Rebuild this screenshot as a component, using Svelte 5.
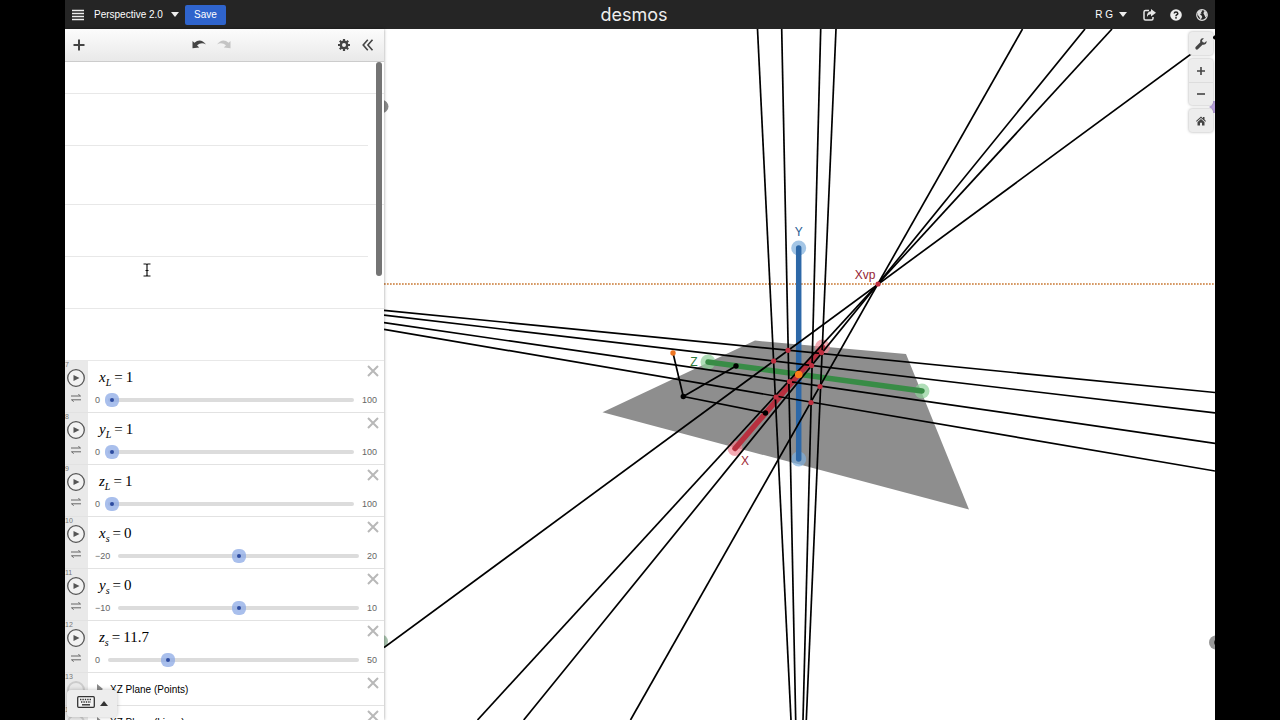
<script>
    let blankRows = [
        { height: 32, short: false },
        { height: 52, short: true },
        { height: 59, short: false },
        { height: 52, short: true },
        { height: 52, short: false },
        { height: 52, short: false }
    ];

    let sliders = [
        { id: 7, name: 'x', sub: 'L', value: 1, min: 0, max: 100 },
        { id: 8, name: 'y', sub: 'L', value: 1, min: 0, max: 100 },
        { id: 9, name: 'z', sub: 'L', value: 1, min: 0, max: 100 },
        { id: 10, name: 'x', sub: 's', value: 0, min: -20, max: 20 },
        { id: 11, name: 'y', sub: 's', value: 0, min: -10, max: 10 },
        { id: 12, name: 'z', sub: 's', value: 11.7, min: 0, max: 50 }
    ];

    let folders = [
        { id: 13, title: 'XZ Plane (Points)' },
        { id: 14, title: 'XZ Plane (Lines)' }
    ];

    // x1, y1, x2, y2
    const lines = [
        [757.5, 29, 791, 720],
        [781.7, 29, 795.7, 720],
        [820.7, 29, 803, 720],
        [836, 29, 806.3, 720],
        [1022.5, 29, 630.5, 720],
        [1085, 29, 523.7, 720],
        [1112, 29, 477.5, 720],
        [1215, 36.5, 384, 647.5],
        [384, 310.3, 1215, 392.5],
        [384, 315.2, 1215, 412.9],
        [384, 322.7, 1215, 443.3],
        [384, 329.3, 1215, 471],
        [673, 353, 683.3, 396.5],
        [683.3, 396.5, 736, 366],
        [683.3, 396.5, 765.5, 413]
    ];

    const redPoints = [
        [788, 350.3], [773.6, 361], [811.6, 365.5], [821.5, 352.6],
        [789.5, 381.5], [776, 397], [820, 386.5], [811, 402.5], [878, 284]
    ];
    const blackPoints = [[683.3, 396.5], [736, 366], [765.5, 413]];

    const axes = [
        { color: '#388c46', halo: '#8ed09a', from: [708, 362], to: [922, 391] },
        { color: '#2d68a8', halo: '#7eaedb', from: [798.7, 248], to: [798.7, 459] },
        { color: '#b8303f', halo: '#ee8794', from: [735, 448.5], to: [822.5, 347] }
    ];

    function format(n) {
        return n < 0 ? '−' + Math.abs(n) : '' + n;
    }

    function removeSlider(id) {
        sliders = sliders.filter((s) => s.id !== id);
    }

    function removeFolder(id) {
        folders = folders.filter((f) => f.id !== id);
    }
</script>

<div class="calculator">
    <header>
        <div class="left">
            <button class="icon" aria-label="Menu">
                <svg width="12" height="12" viewBox="0 0 12 12"><path d="M0 1.500h12M0 4.500h12M0 7.500h12M0 10.500h12" stroke="#eee" stroke-width="1.500" /></svg>
            </button>
            <button class="title">Perspective 2.0 <span class="caret"></span></button>
            <button class="save">Save</button>
        </div>
        <div class="logo">desmos</div>
        <div class="right">
            <button class="title">R G <span class="caret"></span></button>
            <button class="icon" aria-label="Share">
                <svg width="13" height="12" viewBox="0 0 13 12">
                    <path d="M6 1.500H2.500Q1 1.500 1 3v6.500Q1 11 2.500 11h6Q10 11 10 9.500V8" fill="none" stroke="#e6e6e6" stroke-width="1.500" />
                    <path d="M8 0l5 3.700L8 7.400V5.200Q5 5 4 8Q3.500 2.800 8 2.300z" fill="#e6e6e6" />
                </svg>
            </button>
            <button class="icon" aria-label="Help">
                <svg width="12" height="12" viewBox="0 0 12 12">
                    <circle cx="6" cy="6" r="5.800" fill="#eee" />
                    <path d="M4.200 4.500Q4.300 2.900 6 2.900T7.800 4.500Q7.800 5.300 6.700 5.900Q6 6.300 6 7.200" fill="none" stroke="#222" stroke-width="1.500" />
                    <rect x="5.200" y="8.100" width="1.600" height="1.500" fill="#222" />
                </svg>
            </button>
            <button class="icon" aria-label="Language">
                <svg width="12" height="12" viewBox="0 0 12 12">
                    <circle cx="6" cy="6" r="5.300" fill="none" stroke="#ddd" stroke-width="1.200" />
                    <path d="M2 2.300L5.500 1L6.300 2L5 3.200L5.600 4.500L3.800 5L5.500 6.500L6.300 8L4.600 10.800L3.500 8.300L1.500 5.500zM8 2l2.400 1.200L11 6.500L9.500 8.500L8.500 6.200L7.500 4.500z" fill="#ddd" />
                </svg>
            </button>
        </div>
    </header>

    <main>
        <section class="panel">
            <div class="toolbar">
                <button class="icon" aria-label="Add item">
                    <svg width="12" height="12" viewBox="0 0 12 12"><path d="M6 .5v11M.5 6h11" stroke="#444" stroke-width="2" /></svg>
                </button>
                <div class="history">
                    <button class="icon" aria-label="Undo">
                        <svg width="14" height="9" viewBox="0 0 14 9"><path d="M.5 1L2.400 2.800Q8.500-2.500 14 4.500Q9.500 1.700 5 5.300L7.200 7.500L.5 8.300z" fill="#444" /></svg>
                    </button>
                    <button class="icon" aria-label="Redo">
                        <svg width="14" height="9" viewBox="0 0 14 9"><path d="M13.500 1L11.600 2.800Q5.500-2.500 0 4.500Q4.500 1.700 9 5.300L6.800 7.500L13.500 8.300z" fill="#c4c4c4" /></svg>
                    </button>
                </div>
                <div class="settings">
                    <button class="icon" aria-label="Edit list">
                        <svg width="12" height="12" viewBox="0 0 12 12">
                            <circle cx="6" cy="6" r="3.200" fill="none" stroke="#444" stroke-width="2.400" />
                            <path d="M6 0v2.500M6 9.500V12M0 6h2.500M9.500 6H12M1.800 1.800l1.700 1.700M8.500 8.500l1.700 1.700M1.800 10.200l1.700-1.700M8.500 3.500l1.700-1.700" stroke="#444" stroke-width="2.200" />
                        </svg>
                    </button>
                    <button class="icon" aria-label="Hide list">
                        <svg width="12" height="12" viewBox="0 0 12 12"><path d="M5.800.8L1.200 6l4.600 5.200M10.500.8L5.900 6l4.600 5.200" fill="none" stroke="#444" stroke-width="1.600" /></svg>
                    </button>
                </div>
            </div>

            <div class="list">
                {#each blankRows as row}
                    <div class="blank" class:short={row.short} style="height: {row.height}px"></div>
                {/each}

                {#each sliders as s (s.id)}
                    <div class="row">
                        <div class="gutter">
                            <span class="number">{s.id}</span>
                            <button class="icon" aria-label="Play slider {s.id}">
                                <svg width="18" height="18" viewBox="0 0 18 18">
                                    <circle cx="9" cy="9" r="8.300" fill="#f2f2f2" stroke="#555" stroke-width="1.300" />
                                    <path d="M6.500 6v6l6-3z" fill="#555" />
                                </svg>
                            </button>
                            <button class="icon mode" aria-label="Loop mode {s.id}">
                                <svg width="10" height="8" viewBox="0 0 10 8"><path d="M0 2h9.500M7.300.2L9.500 2M.5 5.800H10M.5 5.800l2.200 1.800" fill="none" stroke="#666" stroke-width="1" /></svg>
                            </button>
                        </div>
                        <div class="body">
                            <label class="math" for="slider-{s.id}"><i>{s.name}</i><sub>{s.sub}</sub><span class="equals">=</span>{s.value}</label>
                            <div class="track">
                                <span class="min">{format(s.min)}</span>
                                <input id="slider-{s.id}" type="range" min={s.min} max={s.max} step="0.1" bind:value={s.value} />
                                <span class="max">{format(s.max)}</span>
                            </div>
                        </div>
                        <button class="icon close" aria-label="Delete {s.id}" on:click={() => removeSlider(s.id)}>
                            <svg width="12" height="12" viewBox="0 0 12 12"><path d="M1 1l10 10M11 1L1 11" stroke="#b8b8b8" stroke-width="2" /></svg>
                        </button>
                    </div>
                {/each}

                {#each folders as f (f.id)}
                    <div class="row folder">
                        <div class="gutter">
                            <span class="number">{f.id}</span>
                            <span class="ring"></span>
                        </div>
                        <div class="body">
                            <span class="arrow"></span>
                            <span>{f.title}</span>
                        </div>
                        <button class="icon close" aria-label="Delete {f.id}" on:click={() => removeFolder(f.id)}>
                            <svg width="12" height="12" viewBox="0 0 12 12"><path d="M1 1l10 10M11 1L1 11" stroke="#b8b8b8" stroke-width="2" /></svg>
                        </button>
                    </div>
                {/each}
                <div class="scrollbar"></div>
                <svg class="cursor" width="8" height="14" viewBox="0 0 8 14"><path d="M.5 1H3Q4 1 4 2Q4 1 5 1h2.500M4 2v10M.5 13H3Q4 13 4 12Q4 13 5 13h2.500M2.500 7.500h3" fill="none" stroke="#111" stroke-width="1.200" /></svg>
            </div>

            <button class="keypad" aria-label="Show keypad">
                <svg width="18" height="12" viewBox="0 0 18 12">
                    <rect x=".7" y=".7" width="16.600" height="10.600" rx="1" fill="#f4f4f4" stroke="#333" stroke-width="1.300" />
                    <path d="M3 3.500h12M4 6h10" stroke="#333" stroke-width="1.400" stroke-dasharray="1.400 1" />
                    <path d="M5 8.800h8" stroke="#333" stroke-width="1.400" />
                </svg>
                <span class="up"></span>
            </button>
        </section>

        <section class="graph">
            <svg class="plot" viewBox="384 29 831 691" preserveAspectRatio="xMidYMid slice">
                <polygon points="602.5,412.300 755,340.600 906,354 969,509.500" fill="#8e8e8e" />
                <line x1="384" y1="284" x2="1215" y2="284" stroke="#c97a35" stroke-width="1.700" stroke-dasharray="1.700 1.300" />

                <circle cx="382" cy="106.500" r="6.500" fill="#8a8a8a" />
                <circle cx="381" cy="641.500" r="7" fill="#a9c3ae" />
                <circle cx="1216" cy="642.500" r="7" fill="#999" />
                <circle cx="1217" cy="642.500" r="3" fill="#333" />
                <path d="M1209 107l3-2v-4h4v12h-4v-4z" fill="#b9a3dc" />
                <circle cx="1216" cy="37.500" r="2.500" fill="#000" />

                {#each axes as a}
                    <circle cx={a.from[0]} cy={a.from[1]} r="7.500" fill={a.halo} fill-opacity="0.700" />
                    <circle cx={a.to[0]} cy={a.to[1]} r="7.500" fill={a.halo} fill-opacity="0.700" />
                    <line x1={a.from[0]} y1={a.from[1]} x2={a.to[0]} y2={a.to[1]} stroke={a.color} stroke-width="5.500" stroke-linecap="round" />
                {/each}

                {#each lines as [x1, y1, x2, y2]}
                    <line {x1} {y1} {x2} {y2} stroke="#000" stroke-width="1.700" />
                {/each}
                {#each redPoints as [cx, cy]}
                    <circle {cx} {cy} r="2.600" fill="#c02f40" />
                {/each}
                {#each blackPoints as [cx, cy]}
                    <circle {cx} {cy} r="2.700" fill="#000" />
                {/each}
                <circle cx="673" cy="353" r="2.700" fill="#ed7522" />
                <circle cx="798.700" cy="374.500" r="3.800" fill="#fa7e19" />

                <g class="labels">
                    <text x="798.700" y="236" fill="#2a5d92">Y</text>
                    <text x="694" y="366" fill="#2f7a3c">Z</text>
                    <text x="745" y="465" fill="#a02a38">X</text>
                    <text x="865" y="279" fill="#952434">Xvp</text>
                </g>
            </svg>

            <div class="tools">
                <button class="tool" aria-label="Graph settings">
                    <svg width="12" height="12" viewBox="0 0 12 12"><path d="M11.500 3L9.500 4.800L7.500 4L7 2.300L9 .5Q6.800-.2 5.600 1.500Q4.900 2.700 5.300 4.200L.6 9Q0 10.300.8 11.200Q1.800 12 2.900 11.300L7.500 6.700Q9.200 7.100 10.600 6Q11.900 4.800 11.500 3z" fill="#444" /></svg>
                </button>
                <div class="zoom">
                    <button aria-label="Zoom in"><svg width="8" height="8" viewBox="0 0 8 8"><path d="M4 0v8M0 4h8" stroke="#444" stroke-width="1.600" /></svg></button>
                    <button aria-label="Zoom out"><svg width="8" height="8" viewBox="0 0 8 8"><path d="M0 4h8" stroke="#444" stroke-width="1.600" /></svg></button>
                </div>
                <button class="tool" aria-label="Default view">
                    <svg width="10" height="10" viewBox="0 0 10 10"><path d="M0 5L5 .6L7 2.300V1h1.500v2.600L10 5l-.6.700L5 2L.6 5.700zM1.500 6L5 3l3.500 3v3.500H6V6.800H4v2.700H1.500z" fill="#444" /></svg>
                </button>
            </div>
        </section>
    </main>
</div>

<style>
    :global(body) {
        background: #000;
    }

    .calculator {
        height: 100vh;
        margin: 0 65px;
        display: flex;
        flex-direction: column;
        overflow: hidden;
        font-family: "Liberation Sans", Arial, sans-serif;
        background: #fff;
    }

    button {
        font-family: inherit;
        padding: 0;
        border: none;
        background: none;
        cursor: pointer;
    }

    svg {
        display: block;
    }

    header {
        flex: none;
        height: 29px;
        display: grid;
        grid-template-columns: 44fr auto 45fr;
        align-items: center;
        background: #252525;
        color: #eee;
    }

    .left,
    .right {
        display: flex;
        align-items: center;
        padding: 0 7px;
    }

    .left {
        gap: 10px;
    }

    .left .save {
        margin-left: -4px;
    }

    .right {
        justify-content: flex-end;
        gap: 14px;
    }

    .title {
        display: flex;
        align-items: center;
        gap: 6px;
        font-size: 10px;
        color: #fff;
    }

    .left .title {
        gap: 8px;
    }

    .right .title {
        margin-right: 2px;
    }

    .caret {
        border: 4px solid transparent;
        border-top: 5px solid #eee;
        border-bottom: none;
    }

    .save {
        width: 41px;
        height: 20px;
        border-radius: 2px;
        background: #2f64cc;
        color: #fff;
        font-size: 10px;
    }

    .logo {
        font-family: Inter, sans-serif;
        font-size: 18px;
        line-height: 28px;
    }

    main {
        flex: 1;
        min-height: 0;
        display: flex;
    }

    .panel {
        position: relative;
        z-index: 1;
        flex: none;
        width: 319px;
        display: flex;
        flex-direction: column;
        background: #fff;
        box-shadow: 0 0 3px rgba(0, 0, 0, 0.4);
    }

    .toolbar {
        flex: none;
        height: 33px;
        box-sizing: border-box;
        padding: 0 10px 1px 8px;
        display: grid;
        grid-template-columns: 1fr auto 1fr;
        align-items: center;
        border-bottom: 1px solid #ccc;
        background: linear-gradient(#fcfcfc, #e9e9e9);
    }

    .history {
        display: flex;
        gap: 11px;
        margin-right: 24px;
    }

    .settings {
        display: flex;
        justify-content: flex-end;
        gap: 12px;
    }

    .list {
        position: relative;
        flex: 1;
        min-height: 0;
        overflow: hidden;
    }

    .blank {
        border-bottom: 1px solid #e8e8e8;
        box-sizing: border-box;
    }

    .short {
        margin-right: 16px;
    }

    .scrollbar {
        position: absolute;
        top: 0;
        right: 2px;
        width: 6px;
        height: 214px;
        border-radius: 3px;
        background: #747474;
    }

    .cursor {
        position: absolute;
        top: 201px;
        left: 78px;
    }

    .row {
        position: relative;
        display: flex;
        height: 52px;
        box-sizing: border-box;
        border-bottom: 1px solid #e2e2e2;
    }

    .gutter {
        position: relative;
        flex: none;
        width: 23px;
        display: flex;
        flex-direction: column;
        align-items: center;
        gap: 7px;
        padding: 8px 1px 0 0;
        box-sizing: border-box;
        background: #e9e9e9;
    }

    .number {
        position: absolute;
        top: 0;
        left: 0;
        font-size: 7px;
        line-height: 8px;
        color: #777;
    }

    .body {
        flex: 1;
        padding: 8px 7px 0 7px;
    }

    .math {
        display: block;
        height: 20px;
        padding-left: 4px;
        font-family: "Liberation Serif", "Times New Roman", serif;
        font-size: 15px;
        line-height: 16px;
        color: #000;
    }

    .math sub {
        font-size: 10px;
        font-style: italic;
        line-height: 0;
        vertical-align: -4px;
    }

    .equals {
        margin: 0 3px;
    }

    .track {
        display: flex;
        align-items: center;
        height: 22px;
        font-size: 9px;
        color: #666;
    }

    .min {
        min-width: 5px;
        padding-right: 8px;
    }

    .max {
        padding-left: 8px;
    }

    input {
        flex: 1;
        min-width: 0;
        height: 14px;
        margin: 0;
        appearance: none;
        background: transparent;
    }

    input::-webkit-slider-runnable-track {
        height: 4px;
        border-radius: 2px;
        background: #dcdcdc;
    }

    /* the dot is the thumb, the halo is its shadow */
    input::-webkit-slider-thumb {
        appearance: none;
        width: 4px;
        height: 4px;
        border-radius: 2px;
        background: #2c4ba0;
        box-shadow: 0 0 0 5px rgba(140, 170, 230, 0.75);
    }

    .close {
        position: absolute;
        top: 4px;
        right: 5px;
    }

    .folder {
        height: 33px;
    }

    .folder .body {
        display: flex;
        align-items: center;
        gap: 7px;
        padding-top: 0;
        font-size: 10px;
        color: #000;
    }

    .arrow {
        margin-left: 2px;
        border: 5px solid transparent;
        border-left: 6px solid #888;
        border-right: none;
    }

    .ring {
        width: 14px;
        height: 14px;
        border: 2px solid #ccc;
        border-radius: 50%;
    }

    .keypad {
        position: absolute;
        left: 2px;
        bottom: 3px;
        width: 50px;
        height: 27px;
        display: flex;
        align-items: center;
        justify-content: center;
        gap: 5px;
        padding-bottom: 3px;
        border-radius: 4px;
        background: #ededed;
        box-shadow: 0 0 4px rgba(0, 0, 0, 0.25);
    }

    .up {
        margin-top: 3px;
        border: 4px solid transparent;
        border-bottom: 5px solid #333;
        border-top: none;
    }

    .graph {
        position: relative;
        flex: 1;
        min-width: 0;
    }

    .plot {
        width: 100%;
        height: 100%;
    }

    .labels {
        font-size: 12px;
        text-anchor: middle;
    }

    .tools {
        position: absolute;
        top: 3px;
        right: 2px;
        width: 24px;
        display: flex;
        flex-direction: column;
        gap: 4px;
    }

    .tool,
    .zoom {
        border-radius: 3px;
        background: #ededed;
        box-shadow: 0 0 3px rgba(0, 0, 0, 0.35);
    }

    .tools button {
        width: 24px;
        height: 23px;
        display: flex;
        align-items: center;
        justify-content: center;
    }

    .zoom button + button {
        border-top: 1px solid #ddd;
    }
</style>
